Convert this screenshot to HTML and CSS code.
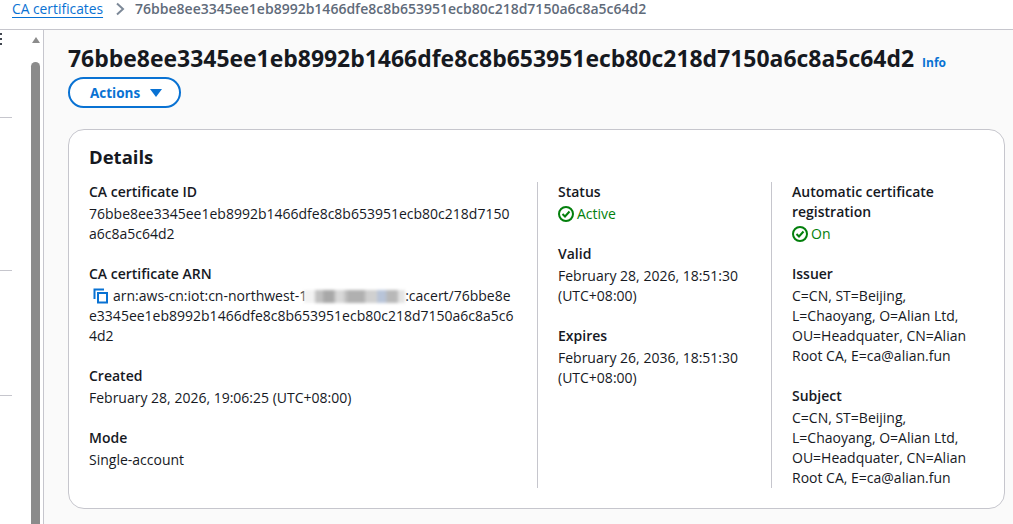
FILE: index.html
```html
<!DOCTYPE html>
<html lang="en">
<head>
  <meta charset="UTF-8">
  <title>CA certificate details</title>
  <link rel="stylesheet" href="styles.css">
</head>
<body>
  <nav class="breadcrumbs">
    <a class="crumb-link" href="#">CA certificates</a>
    <svg class="crumb-arrow" width="10" height="14" viewBox="0 0 10 14"><path d="M2 1.5 8 7l-6 5.5" fill="none" stroke="#7d8998" stroke-width="2"/></svg>
    <span class="crumb-current">76bbe8ee3345ee1eb8992b1466dfe8c8b653951ecb80c218d7150a6c8a5c64d2</span>
  </nav>
  <div class="shell">
    <aside class="side">
      <div class="side-handle"></div>
      <div class="side-rules">
        <div class="side-rule rule-a"></div>
        <div class="side-rule rule-b"></div>
        <div class="side-rule rule-c"></div>
      </div>
      <div class="scrollbar">
        <div class="scroll-arrow"></div>
        <div class="scroll-thumb"></div>
      </div>
    </aside>
    <main class="content">
      <div class="title-row">
        <h1>76bbe8ee3345ee1eb8992b1466dfe8c8b653951ecb80c218d7150a6c8a5c64d2</h1>
        <a class="info" href="#">Info</a>
      </div>
      <button class="actions">Actions <span class="caret"></span></button>
      <section class="card">
        <h2>Details</h2>
        <div class="columns">
          <div class="col col-first">
            <div class="item">
              <div class="label">CA certificate ID</div>
              <div class="value">76bbe8ee3345ee1eb8992b1466dfe8c8b653951ecb80c218d7150a6c8a5c64d2</div>
            </div>
            <div class="item">
              <div class="label">CA certificate ARN</div>
              <div class="value">
                <span class="arn-start"><svg class="copy" width="18" height="16" viewBox="0 0 18 16"><path d="M3.500 11V1.500H13" fill="none" stroke="#0972d3" stroke-width="2"/><rect x="7" y="5" width="9" height="9.500" fill="none" stroke="#0972d3" stroke-width="2"/></svg>arn:aws-cn:iot:cn-northwest-1<span class="blurred"></span>:cacert/76bbe8e</span>e3345ee1eb8992b1466dfe8c8b653951ecb80c218d7150a6c8a5c64d2
              </div>
            </div>
            <div class="item">
              <div class="label">Created</div>
              <div class="value">February 28, 2026, 19:06:25 (UTC+08:00)</div>
            </div>
            <div class="item">
              <div class="label">Mode</div>
              <div class="value">Single-account</div>
            </div>
          </div>
          <div class="col col-mid">
            <div class="item">
              <div class="label">Status</div>
              <div class="value status">
                <svg width="16" height="16" viewBox="0 0 16 16"><circle cx="8" cy="8" r="7" fill="none" stroke="#037f0c" stroke-width="2"/><path d="M4.500 8 7 10.500 11.500 5.500" fill="none" stroke="#037f0c" stroke-width="2"/></svg>
                Active
              </div>
            </div>
            <div class="item">
              <div class="label">Valid</div>
              <div class="value">February 28, 2026, 18:51:30 (UTC+08:00)</div>
            </div>
            <div class="item">
              <div class="label">Expires</div>
              <div class="value">February 26, 2036, 18:51:30 (UTC+08:00)</div>
            </div>
          </div>
          <div class="col col-last">
            <div class="item">
              <div class="label">Automatic certificate registration</div>
              <div class="value status">
                <svg width="16" height="16" viewBox="0 0 16 16"><circle cx="8" cy="8" r="7" fill="none" stroke="#037f0c" stroke-width="2"/><path d="M4.500 8 7 10.500 11.500 5.500" fill="none" stroke="#037f0c" stroke-width="2"/></svg>
                On
              </div>
            </div>
            <div class="item">
              <div class="label">Issuer</div>
              <div class="value">C=CN, ST=Beijing, L=Chaoyang, O=Alian Ltd, OU=Headquater, CN=Alian Root CA, E=ca@alian.fun</div>
            </div>
            <div class="item">
              <div class="label">Subject</div>
              <div class="value">C=CN, ST=Beijing, L=Chaoyang, O=Alian Ltd, OU=Headquater, CN=Alian Root CA, E=ca@alian.fun</div>
            </div>
          </div>
        </div>
      </section>
    </main>
  </div>
</body>
</html>
```

FILE: styles.css
```css
* {
  box-sizing: border-box;
}
html, body {
  height: 100%;
}
body {
  margin: 0;
  font-family: "Open Sans", "Noto Sans", Arial, sans-serif;
  font-size: 14px;
  line-height: 20px;
  color: #16191f;
  background: #fff;
  overflow: hidden;
}
.breadcrumbs {
  height: 30px;
  padding: 0 0 11px 12px;
  display: flex;
  align-items: center;
  border-bottom: 1px solid #c6c6cd;
}
.crumb-link {
  color: #0972d3;
  text-decoration: underline;
  text-underline-offset: 3px;
  font-size: 13.800px;
}
.crumb-arrow {
  margin: 0 10px 0 12px;
}
.crumb-current {
  color: #5f6b7a;
  font-weight: 600;
}
.shell {
  display: flex;
  height: 494px;
}
.side {
  position: relative;
  width: 44px;
  flex: none;
  background: #fff;
  border-right: 1px solid #c6c6cd;
}
.side-handle {
  position: absolute;
  left: 0;
  top: 3px;
  width: 2px;
  height: 14px;
  background: repeating-linear-gradient(#414750 0 2px, transparent 2px 5px);
}
.side-rule {
  position: absolute;
  left: 0;
  width: 12px;
  height: 1px;
  background: #c6c6cd;
}
.rule-a { top: 87px; }
.rule-b { top: 240px; }
.rule-c { top: 365px; }
.scrollbar {
  position: absolute;
  left: 31px;
  top: 0;
  width: 9px;
  height: 100%;
}
.scroll-arrow {
  margin: 7px auto 0;
  width: 0;
  border-left: 4px solid transparent;
  border-right: 4px solid transparent;
  border-bottom: 6px solid #8c8c8c;
}
.scroll-thumb {
  margin-top: 19px;
  height: 470px;
  background: #8b8b8b;
  border-radius: 5px 5px 0 0;
}
.content {
  flex: 1;
  padding: 13px 8px 0 24px;
  background: #fafafa;
}
.title-row {
  display: flex;
  align-items: baseline;
  gap: 8px;
}
h1 {
  margin: 0;
  font-size: 22.950px;
  line-height: 30px;
  font-weight: 700;
}
.info {
  color: #0972d3;
  font-size: 12px;
  font-weight: 700;
  text-decoration: none;
}
.actions {
  display: flex;
  align-items: center;
  gap: 10px;
  margin-top: 4px;
  width: 113px;
  height: 31px;
  padding: 0 0 0 20px;
  background: #fff;
  border: 2px solid #0972d3;
  border-radius: 20px;
  color: #0972d3;
  font: 700 13.500px "Open Sans", "Noto Sans", Arial, sans-serif;
}
.caret {
  width: 0;
  border-left: 6px solid transparent;
  border-right: 6px solid transparent;
  border-top: 8px solid #0972d3;
}
.card {
  margin-top: 21px;
  height: 380px;
  padding: 15px 20px 20px;
  background: #fff;
  border: 1px solid #c6c6cd;
  border-radius: 16px;
}
h2 {
  margin: 0 0 13px;
  font-size: 18.500px;
  line-height: 24px;
  font-weight: 700;
}
.columns {
  display: grid;
  grid-template-columns: 448px 234px 213px;
  height: 306px;
}
.col {
  display: flex;
  flex-direction: column;
  gap: 20px;
}
.col-first {
  padding-right: 22px;
}
.col-mid, .col-last {
  padding-left: 20px;
  border-left: 1px solid #c6c6cd;
}
.col-mid {
  padding-right: 30px;
}
.label {
  font-weight: 600;
  margin-bottom: 2px;
}
.value {
  overflow-wrap: anywhere;
}
.arn-start {
  white-space: nowrap;
}
.copy {
  vertical-align: -3px;
  margin-left: 2px;
  margin-right: 4px;
}
.blurred {
  display: inline-block;
  width: 101px;
  height: 13px;
  margin-left: -3px;
  vertical-align: -2px;
  filter: blur(1.500px);
  background: linear-gradient(90deg, #f2f2f2 0 10%, #c0c0c0 12% 18%, #a8a8a8 20% 29%, #d8d8d8 32% 38%, #b0b0b0 44% 59%, #d0d0d0 62% 72%, #b8c4d8 73% 80%, #b8b8b8 83% 92%, #e4e4e4 94%);
}
.status {
  color: #037f0c;
  display: flex;
  align-items: center;
  gap: 3px;
}
```
